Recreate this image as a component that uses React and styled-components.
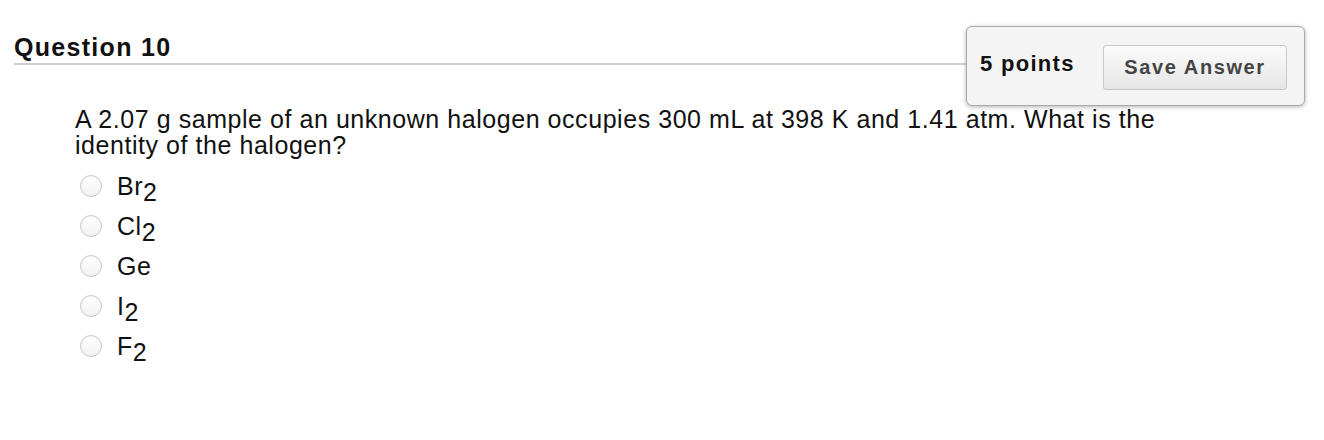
import React from "react";
import styled, { createGlobalStyle } from "styled-components";

const GlobalStyle = createGlobalStyle`
	body {
		margin: 0;
		background: #fff;
		font-family: "Liberation Sans", Arial, sans-serif;
		color: #111;
	}
`;

const Page = styled.div`
	position: relative;
	width: 1324px;
	height: 440px;
	padding: 0 19px 0 14px;
	box-sizing: border-box;
`;

const Header = styled.div`
	position: relative;
	padding-top: 33px;
	border-bottom: 2px solid #cfcfcf;
	height: 30px;
	box-sizing: content-box;
`;

const Title = styled.h2`
	margin: 0;
	font-size: 25px;
	font-weight: bold;
	letter-spacing: 1.3px;
	line-height: 28px;
	color: #111;
`;

const PointsBox = styled.div`
	position: absolute;
	right: 0;
	top: 26px;
	width: 339px;
	height: 80px;
	box-sizing: border-box;
	display: flex;
	align-items: center;
	justify-content: space-between;
	padding: 0 17px 0 13px;
	background: #f4f4f4;
	border: 1px solid #a9a9a9;
	border-radius: 6px;
	box-shadow: 0 1px 4px rgba(0, 0, 0, 0.3);
`;

const Points = styled.span`
	font-size: 22px;
	font-weight: bold;
	letter-spacing: 1.3px;
	color: #111;
	margin-bottom: 4px;
`;

const SaveButton = styled.button`
	width: 184px;
	height: 45px;
	padding: 0;
	font-family: "Liberation Sans", Arial, sans-serif;
	font-size: 20px;
	font-weight: bold;
	letter-spacing: 1.6px;
	color: #444;
	background: linear-gradient(#fbfbfb, #e6e6e6);
	border: 1px solid #c8c8c8;
	border-radius: 3px;
	margin-top: 2px;
`;

const Body = styled.div`
	padding: 41px 0 0 61px;
`;

const QuestionText = styled.p`
	margin: 0;
	width: 1110px;
	font-size: 25px;
	letter-spacing: 0.55px;
	line-height: 26px;
	color: #111;
`;

const Options = styled.ul`
	list-style: none;
	margin: 8px 0 0;
	padding: 0 0 0 5px;
`;

const Option = styled.li`
	display: flex;
	align-items: center;
	height: 40px;
	gap: 15px;
	font-size: 25px;
	letter-spacing: 0.55px;
`;

const Radio = styled.span`
	width: 20px;
	height: 20px;
	border-radius: 50%;
	border: 1px solid #c9c9c9;
	background: linear-gradient(#ffffff, #f1f1f1);
	box-shadow: inset 0 1px 1px rgba(0, 0, 0, 0.05);
	flex: none;
`;

const Sub = styled.span`
	position: relative;
	top: 6px;
`;

const options = [
	["Br", "2"],
	["Cl", "2"],
	["Ge", ""],
	["I", "2"],
	["F", "2"]
];

export default function App() {
	return (
		<Page>
			<GlobalStyle />
			<Header>
				<Title>Question 10</Title>
				<PointsBox>
					<Points>5 points</Points>
					<SaveButton>Save Answer</SaveButton>
				</PointsBox>
			</Header>
			<Body>
				<QuestionText>
					A 2.07 g sample of an unknown halogen occupies 300 mL at 398 K and 1.41 atm. What is the
					identity of the halogen?
				</QuestionText>
				<Options>
					{options.map(([el, sub]) => (
						<Option key={el}>
							<Radio />
							<span>
								{el}
								{sub && <Sub>{sub}</Sub>}
							</span>
						</Option>
					))}
				</Options>
			</Body>
		</Page>
	);
}
